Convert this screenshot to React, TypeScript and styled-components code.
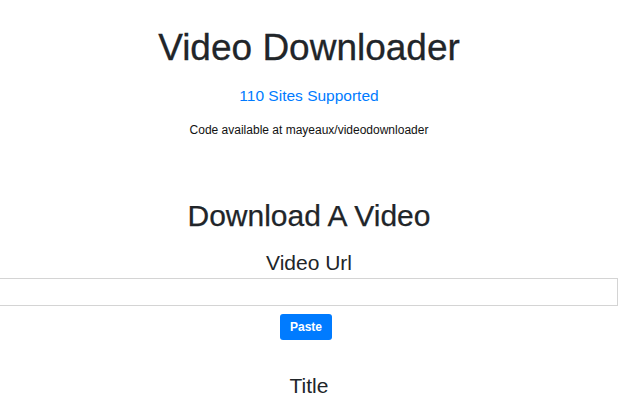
import React from 'react';
import styled, { createGlobalStyle } from 'styled-components';

const GlobalStyle = createGlobalStyle`
  body {
    margin: 0;
    background: #fff;
    color: #212529;
    font-family: "Liberation Sans", Arial, sans-serif;
  }
`;

/**
 * Page container.
 */
const Page = styled.div`
  display: flex;
  flex-direction: column;
  align-items: center;
  text-align: center;
  padding-top: 26px;
`;

const Heading = styled.h1`
  font-size: 37px;
  font-weight: 500;
  line-height: 1.2;
  margin: 0;
  -webkit-text-stroke: 0.3px #212529;
`;

const SitesLink = styled.a`
  font-size: 15.5px;
  color: #007bff;
  text-decoration: none;
  margin-top: 17px;
  line-height: 1.2;
`;

const Note = styled.p`
  font-size: 12px;
  margin: 17px 0 0;
  line-height: 1.2;
  color: #111;
`;

const SubHeading = styled.h2`
  font-size: 30px;
  font-weight: 500;
  line-height: 1.2;
  margin: 61px 0 0;
  -webkit-text-stroke: 0.25px #212529;
`;

const Label = styled.label<{ $top: number }>`
  font-size: 21px;
  line-height: 1.1;
  margin-top: ${props => props.$top}px;
`;

const Form = styled.div`
  width: 100%;
  display: flex;
  flex-direction: column;
  align-items: center;
`;

const UrlInput = styled.input`
  box-sizing: border-box;
  width: calc(100% + 1px);
  margin: 4px 0 0 -2px;
  height: 28px;
  border: 1px solid #d4d4d4;
  border-radius: 0;
  outline: none;
`;

const PasteButton = styled.button`
  margin: 8px 0 0 -6px;
  width: 52px;
  height: 26px;
  background: #007bff;
  color: #fff;
  border: none;
  border-radius: 3px;
  font-family: "Liberation Sans", Arial, sans-serif;
  font-weight: 700;
  font-size: 12px;
  padding: 0;
`;

const App: React.FC = () => {
  return (
    <>
      <GlobalStyle />
      <Page>
        <Heading>Video Downloader</Heading>
        <SitesLink href="#">110 Sites Supported</SitesLink>
        <Note>Code available at mayeaux/videodownloader</Note>
        <SubHeading>Download A Video</SubHeading>
        <Form>
          <Label $top={17}>Video Url</Label>
          <UrlInput type="text" />
          <PasteButton>Paste</PasteButton>
          <Label $top={34}>Title</Label>
        </Form>
      </Page>
    </>
  );
};

export default App;
